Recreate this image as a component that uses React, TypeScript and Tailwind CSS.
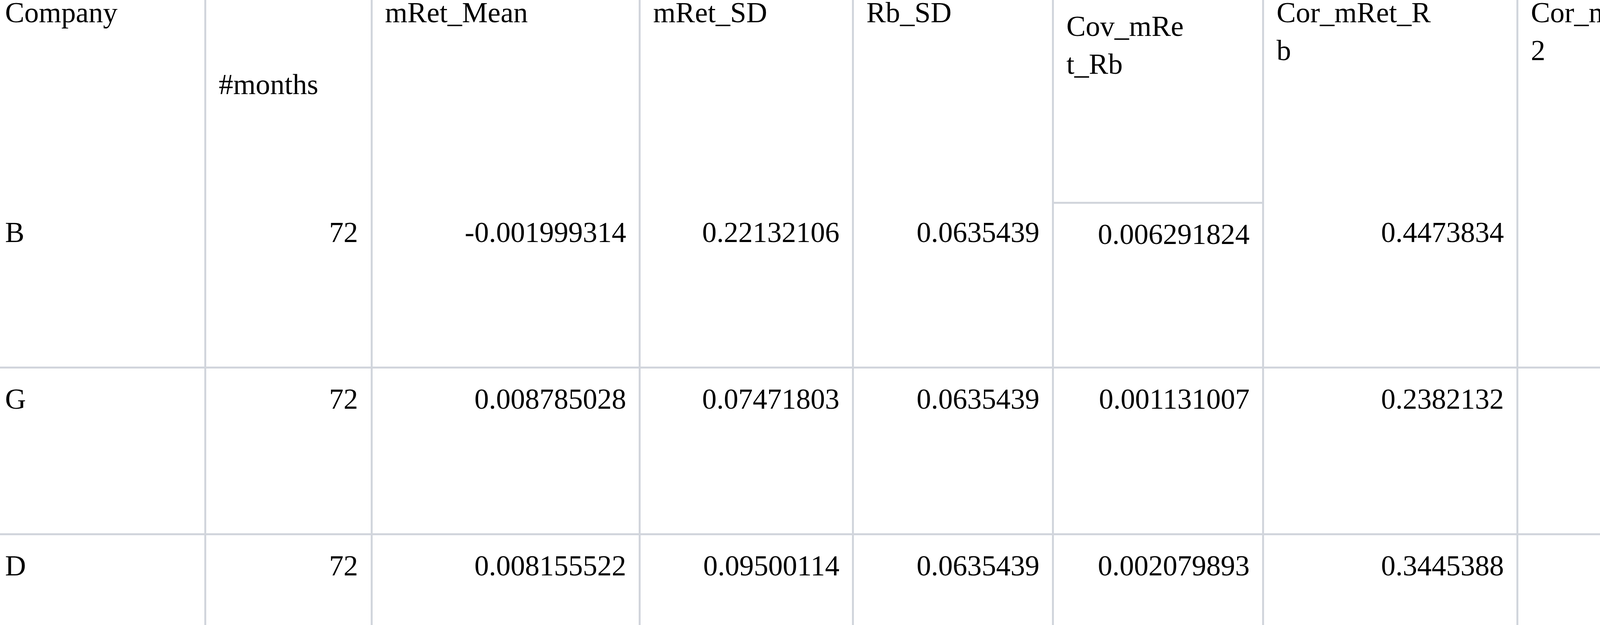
const headers = [
  { label: 'Company', pad: 'pt-[30px]', wrap: '' },
  { label: '#months', pad: 'pt-[214px]', wrap: '' },
  { label: 'mRet_Mean', pad: 'pt-[30px]', wrap: '' },
  { label: 'mRet_SD', pad: 'pt-[30px]', wrap: '' },
  { label: 'Rb_SD', pad: 'pt-[30px]', wrap: '' },
  { label: 'Cov_mRet_Rb', pad: 'pt-[65px]', wrap: 'w-[310px]' },
  { label: 'Cor_mRet_Rb', pad: 'pt-[30px]', wrap: 'w-[410px]' },
  { label: 'Cor_mRet_Rb2', pad: 'pt-[30px]', wrap: 'w-[450px]' },
];

const rows = [
  ['B', '72', '-0.001999314', '0.22132106', '0.0635439', '0.006291824', '0.4473834', '0.4473834'],
  ['G', '72', '0.008785028', '0.07471803', '0.0635439', '0.001131007', '0.2382132', '0.2382132'],
  ['D', '72', '0.008155522', '0.09500114', '0.0635439', '0.002079893', '0.3445388', '0.3445388'],
];

// first column is cut at the left edge, last one runs to the right edge
const cellX = (c: number) =>
  c === 0
    ? 'border-r-[5px] pl-[13px] pr-[32px]'
    : c === 7
      ? 'pl-[32px] pr-[30px]'
      : 'border-r-[5px] px-[32px]';

export default function App() {
  return (
    <div className="h-[1601px] w-[4536px] overflow-hidden bg-white">
      <div className="-mt-[46px] grid grid-cols-[528px_425.5px_686.5px_546px_512px_538px_651px_649px] grid-rows-[563px_422px_427px_427px] font-['Liberation_Serif','Times_New_Roman',serif] text-[74px] leading-[97px] text-black">
        {headers.map((h, c) => (
          <div key={h.label} className={`border-gray-300 text-left ${cellX(c)} ${h.pad}`}>
            <span className={h.wrap ? `block break-all ${h.wrap}` : 'block'}>{h.label}</span>
          </div>
        ))}

        {rows.map((row, r) =>
          row.map((cell, c) => {
            // Cov is the only header cell closed off by a rule
            const covTop = r === 0 && c === 5;
            return (
              <div
                key={`${r}-${c}`}
                className={[
                  'border-gray-300 pt-[30px]',
                  cellX(c),
                  r > 0 || covTop ? 'border-t-[5px]' : '',
                  c === 0 ? 'text-left' : 'text-right',
                ].join(' ')}
              >
                {cell}
              </div>
            );
          })
        )}
      </div>
    </div>
  );
}
